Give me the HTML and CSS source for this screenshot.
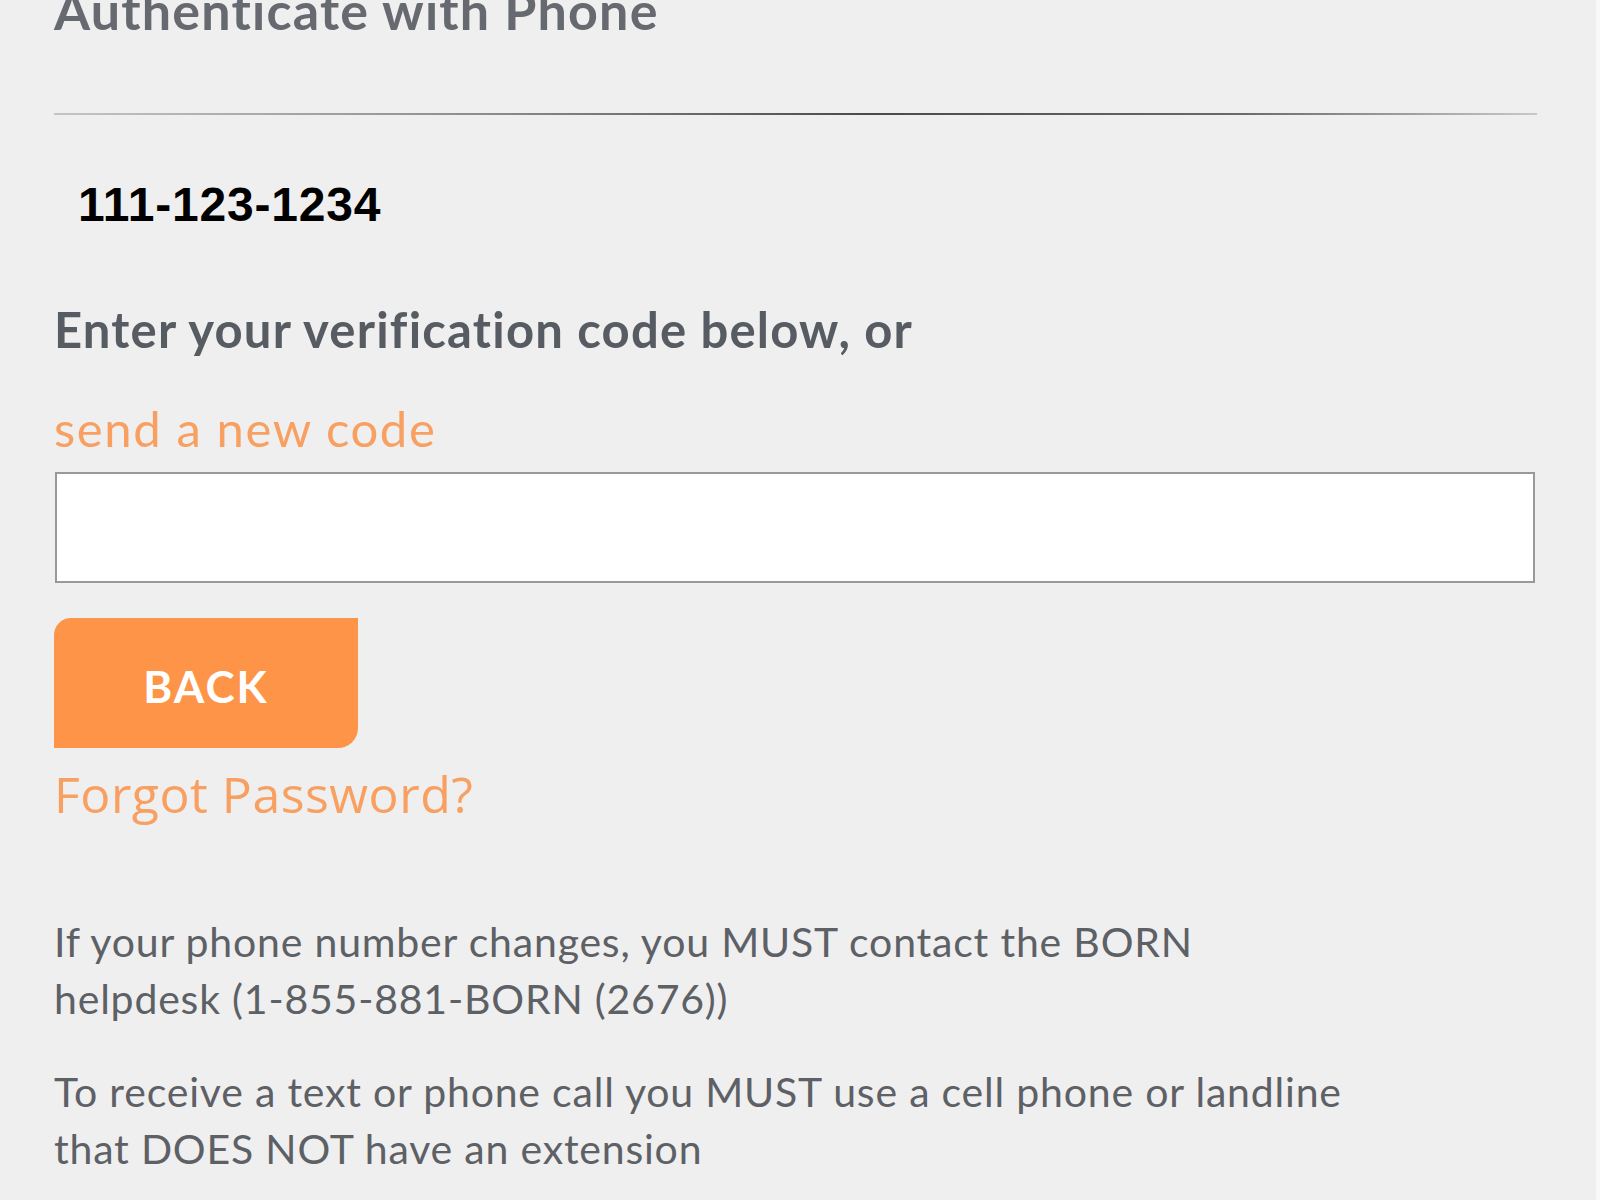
FILE: index.html
```html
<!DOCTYPE html>
<html lang="en">
<head>
<meta charset="utf-8">
<title>Authenticate with Phone</title>
<link rel="stylesheet" href="styles.css">
</head>
<body>
<div class="page">
  <main class="panel">
    <h1 class="title">Authenticate with Phone</h1>
    <hr class="rule">
    <div class="phone">111-123-1234</div>
    <p class="prompt">Enter your verification code below, or</p>
    <a class="resend" href="#">send a new code</a>
    <input class="code-input" type="text" aria-label="Verification code">
    <button class="back-btn" type="button">BACK</button>
    <a class="forgot" href="#">Forgot Password?</a>
    <p class="note note-first">If your phone number changes, you MUST contact the BORN<br>helpdesk (1-855-881-BORN (2676))</p>
    <p class="note note-second">To receive a text or phone call you MUST use a cell phone or landline<br>that DOES NOT have an extension</p>
  </main>
</div>
</body>
</html>
```
FILE: styles.css
```css
html, body {
  margin: 0;
  padding: 0;
  background: #f8f8f8;
}
.page {
  width: 1596px;
  height: 1200px;
  overflow: hidden;
  background: #efefef;
}
.panel {
  display: flex;
  flex-direction: column;
  align-items: flex-start;
  padding-left: 54px;
  width: 1483px;
  font-family: Lato, "Open Sans", sans-serif;
}
.title {
  margin: -21px 0 0 0;
  font-size: 52px;
  line-height: 62px;
  font-weight: 700;
  color: #666a70;
  letter-spacing: 1.2px;
  white-space: nowrap;
}
.rule {
  align-self: stretch;
  margin: 72px 0 0 0;
  height: 2px;
  border: 0;
  background: linear-gradient(to right, #c4c4c4 0%, #8a8a8a 30%, #4a4a4a 55%, #6a6a6a 80%, #c8c8c8 100%);
}
.phone {
  margin: 62px 0 0 24px;
  font-family: "Liberation Sans", Arial, sans-serif;
  font-weight: 700;
  font-size: 48px;
  line-height: 56px;
  letter-spacing: 0.8px;
  color: #000;
}
.prompt {
  margin: 67px 0 0 0;
  font-size: 49px;
  line-height: 58px;
  font-weight: 700;
  color: #575c63;
  letter-spacing: 1.2px;
}
.resend {
  margin-top: 41px;
  font-size: 49px;
  line-height: 58px;
  color: #f8a062;
  text-decoration: none;
  letter-spacing: 1.6px;
}
.code-input {
  align-self: stretch;
  box-sizing: border-box;
  margin: 15px 2px 0 1px;
  height: 111px;
  border: 2px solid #999;
  background: #fff;
  outline: none;
}
.back-btn {
  margin-top: 35px;
  box-sizing: border-box;
  width: 304px;
  height: 130px;
  border: 0;
  border-radius: 17px 0 20px 0;
  background: #fd9447;
  color: #fff;
  font-family: Lato, sans-serif;
  font-weight: 700;
  font-size: 44px;
  letter-spacing: 2px;
  padding: 6px 0 0 0;
}
.forgot {
  margin-top: 15px;
  font-family: "Open Sans", Lato, sans-serif;
  font-size: 50px;
  line-height: 62px;
  color: #f8a062;
  text-decoration: none;
  letter-spacing: 0.5px;
}
.note {
  margin: 0;
  font-size: 41px;
  line-height: 57px;
  color: #5d6065;
  letter-spacing: 0.8px;
}
.note-first {
  margin-top: 88px;
}
.note-second {
  margin-top: 36px;
}
```
